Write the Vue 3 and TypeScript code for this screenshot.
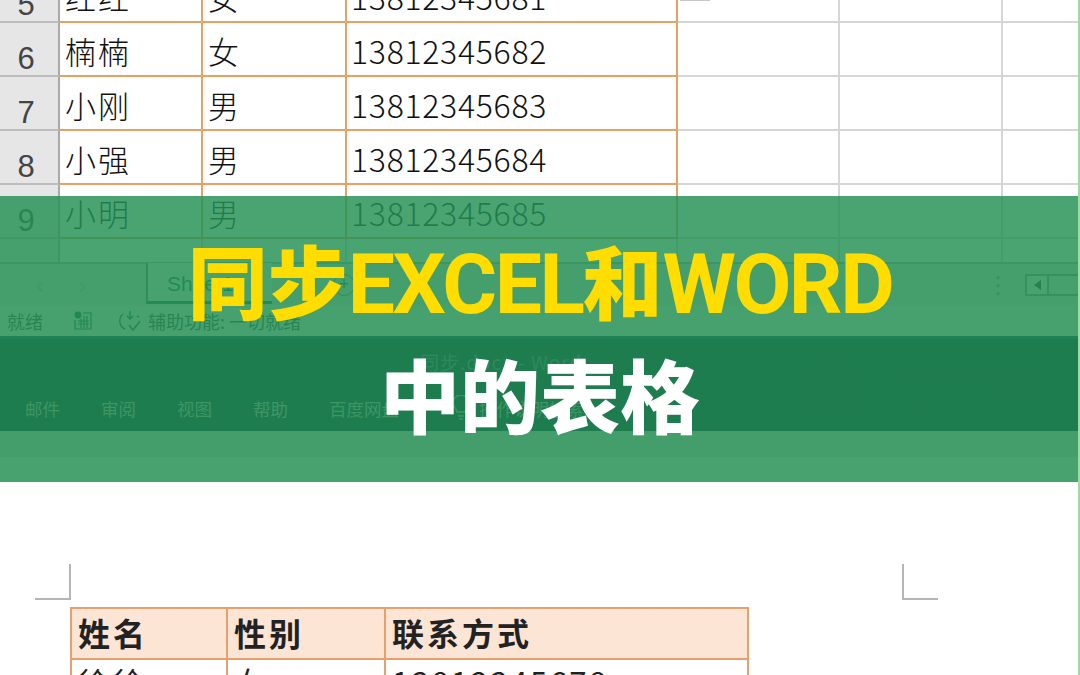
<script setup lang="ts">
interface Row { no: number; name: string; sex: string; phone: string }
const rows: Row[] = [
  { no: 5, name: '红红', sex: '女', phone: '13812345681' },
  { no: 6, name: '楠楠', sex: '女', phone: '13812345682' },
  { no: 7, name: '小刚', sex: '男', phone: '13812345683' },
  { no: 8, name: '小强', sex: '男', phone: '13812345684' },
  { no: 9, name: '小明', sex: '男', phone: '13812345685' },
]
const tabs = ['邮件', '审阅', '视图', '帮助', '百度网盘']
</script>

<template>
  <div class="page">
    <section class="excel">
      <div class="sheet">
        <div class="grid">
          <template v-for="r in rows" :key="r.no">
            <div class="hd"><span>{{ r.no }}</span></div>
            <div class="c or">{{ r.name }}</div>
            <div class="c or">{{ r.sex }}</div>
            <div class="c or phone">{{ r.phone }}</div>
            <div class="e"></div>
            <div class="e"></div>
            <div class="e last"></div>
          </template>
          <div class="hd short"></div>
          <div class="e short"></div>
          <div class="e short"></div>
          <div class="e short"></div>
          <div class="e short"></div>
          <div class="e short"></div>
          <div class="e short last"></div>
        </div>
        <div class="tick"></div>
      </div>
      <div class="tabbar">
        <span class="arrow">‹</span>
        <span class="arrow">›</span>
        <div class="tab">Sheet1</div>
        <span class="plus">+</span>
        <span class="dots">⋮</span>
        <div class="hscroll"><span class="tri"></span></div>
      </div>
      <div class="status">
        <span>就绪</span>
        <svg class="calc" width="20" height="20" viewBox="0 0 20 20">
          <circle cx="5" cy="4" r="3.4" fill="#1f5c38" />
          <path d="M10 2h8v16H2V9M5 10h11M5 13h11M8 8v9M11 5v12M14 5v12" fill="none" stroke="#1f5c38" stroke-width="1.2" />
        </svg>
        <svg class="acc" width="28" height="22" viewBox="0 0 28 22">
          <path d="M6 4a9 9 0 0 0 2 15M13 1v7M10 6l3 3 3-3M20 6l2 1M12 15l4 5 7-9" fill="none" stroke="#1f5c38" stroke-width="1.4" />
        </svg>
        <span class="acc-text">辅助功能: 一切就绪</span>
      </div>
    </section>

    <section class="word">
      <div class="titlebar">
        <div class="doc-title">同步.docx - Word</div>
        <div class="menu">
          <span v-for="t in tabs" :key="t">{{ t }}</span>
          <svg class="bulb" width="20" height="26" viewBox="0 0 20 26">
            <path d="M6 17c0-3-4-5-4-9a8 8 0 0 1 16 0c0 4-4 6-4 9zM7 21h6M8 24h4" fill="none" stroke="#b5a5a5" stroke-width="1.4" />
          </svg>
          <span class="search">操作说明搜索</span>
        </div>
        <svg class="logo" width="240" height="70" viewBox="0 0 240 70">
          <circle cx="30" cy="35" r="26" fill="none" stroke="#000" stroke-opacity=".18" stroke-width="5" />
          <path d="M20 48V22l20 26V22" fill="none" stroke="#000" stroke-opacity=".18" stroke-width="5" />
          <path d="M95 25h140M110 62l30-22M190 40h45" fill="none" stroke="#000" stroke-opacity=".1" stroke-width="4" />
        </svg>
      </div>
      <div class="ribbon-a"></div>
      <div class="ribbon-b"></div>
      <div class="doc">
        <div class="marks">
          <div class="mark left"></div>
          <div class="mark right"></div>
        </div>
        <div class="dtable">
          <div class="th">姓名</div>
          <div class="th">性别</div>
          <div class="th">联系方式</div>
          <div class="td">徐徐</div>
          <div class="td">女</div>
          <div class="td num">13812345678</div>
        </div>
      </div>
    </section>

    <div class="banner">
      <div class="titles">
        <div class="line one">同步<span class="lat">EXCEL</span>和<span class="lat">WORD</span></div>
        <div class="line two">中的表格</div>
      </div>
    </div>
    <div class="edge"></div>
  </div>
</template>

<style>
html, body { margin: 0; background: #fff; }
</style>

<style scoped>
.page {
  position: relative;
  width: 1080px;
  height: 675px;
  overflow: hidden;
  background: #fff;
  font-family: "Noto Sans CJK SC", "Liberation Sans", sans-serif;
  color: #222;
}
.excel { height: 339px; display: flex; flex-direction: column; }
.sheet { height: 262px; overflow: hidden; flex: none; position: relative; }
.tick { position: absolute; left: 680px; top: 0; width: 30px; height: 1px; background: #c8c8c8; }
.grid {
  display: grid;
  grid-template-columns: 60px 143px 144px 331px 162px 163px 77px;
  grid-auto-rows: 54px;
  margin-top: -31px;
}
.hd {
  background: #e6e6e6;
  border-right: 2px solid #a9a9a9;
  border-bottom: 2px solid #bdbdbd;
  box-sizing: border-box;
  display: flex;
  justify-content: center;
  font: 31px/1 "Liberation Sans", sans-serif;
  color: #444;
  padding-top: 20px;
  padding-right: 6px;
}
.c {
  box-sizing: border-box;
  border-right: 2px solid #e7a162;
  border-bottom: 2px solid #e7a162;
  padding: 2px 0 0 5px;
  display: flex;
  align-items: center;
  font: 300 31px/1 "Noto Sans CJK SC", sans-serif;
  letter-spacing: 2px;
  color: #111;
}
.c.phone { font-size: 32px; letter-spacing: 0.7px; padding-left: 4px; }
.e {
  box-sizing: border-box;
  border-right: 2px solid #d6d6d6;
  border-bottom: 2px solid #d6d6d6;
}
.last { border-right: 0; }
.short { height: 24px; border-bottom: 0; padding: 0; }

.tabbar {
  height: 43px;
  flex: none;
  background: #e2e2e2;
  border-top: 2px solid #ababab;
  box-sizing: border-box;
  display: flex;
  align-items: center;
  position: relative;
  font: 21px/1 "Liberation Sans", sans-serif;
  color: #1c6a3a;
}
.arrow { width: 42px; text-align: center; color: #c2c2c2; font-size: 26px; }
.arrow:first-child { margin-left: 19px; }
.arrow + .arrow { margin-right: 43px; }
.tab {
  width: 126px;
  height: 41px;
  margin-top: -2px;
  box-sizing: border-box;
  background: #f4f4f4;
  border-left: 2px solid #777;
  border-bottom: 3px solid #217346;
  padding: 10px 0 0 19px;
}
.plus {
  margin-left: 61px;
  width: 20px; height: 20px;
  border: 1.5px solid #777;
  border-radius: 50%;
  text-align: center;
  font-size: 18px;
}
.dots { margin-left: auto; margin-right: 15px; color: #999; font-size: 24px; }
.hscroll {
  width: 55px;
  height: 22px;
  box-sizing: border-box;
  border: 2px solid #8f8f8f;
  border-right: 0;
  display: flex;
  align-items: center;
  padding-left: 7px;
  background: linear-gradient(90deg, #f0f0f0 20px, #888 20px, #888 22px, #e6e6e6 22px);
}
.tri { border: 5px solid transparent; border-right: 7px solid #333; border-left: 0; }
.status {
  height: 31px;
  flex: none;
  background: #ebebeb;
  display: flex;
  align-items: center;
  padding-left: 7px;
  font-size: 18px;
  color: #444;
}
.calc { margin-left: 30px; }
.acc { margin-left: 24px; }
.acc-text { margin-left: 3px; }
.excel::after { content: ""; height: 3px; background: #0d3a5e; flex: none; }

.word { display: flex; flex-direction: column; }
.titlebar { height: 92px; background: #00192e; position: relative; }
.doc-title {
  padding: 10px 0 0 420px;
  font-size: 19px;
  line-height: 26px;
  color: #606078;
  letter-spacing: 1px;
}
.menu {
  display: flex;
  align-items: center;
  font-size: 17.5px;
  color: #b5a5a5;
  padding: 20px 0 0 25px;
  gap: 41px;
}
.bulb { margin-left: 11px; margin-right: -33px; }
.logo { position: absolute; left: 800px; top: 15px; }
.ribbon-a { height: 26px; background: #dcdcdc; }
.ribbon-b { height: 25px; background: #f3f3f3; }
.doc { padding-top: 82px; background: #fff; height: 193px; box-sizing: border-box; }
.marks { display: flex; padding-left: 35px; width: 902px; box-sizing: border-box; justify-content: space-between; height: 36px; }
.mark { width: 36px; height: 36px; box-sizing: border-box; border-bottom: 2px solid #b5b5b5; }
.mark.left { border-right: 2px solid #b5b5b5; }
.mark.right { border-left: 2px solid #b5b5b5; margin-right: -36px; }
.dtable {
  margin: 7px 0 0 70px;
  width: 679px;
  display: grid;
  grid-template-columns: 156px 158px 363px;
  grid-template-rows: 51px 60px;
  border-top: 2px solid #e5a06e;
  border-left: 2px solid #e5a06e;
  box-sizing: border-box;
}
.th, .td {
  box-sizing: border-box;
  border-right: 2px solid #e5a06e;
  border-bottom: 2px solid #e5a06e;
  padding-left: 6px;
}
.th {
  background: #fde5d5;
  font-size: 32px;
  font-weight: 700;
  letter-spacing: 3px;
  line-height: 46px;
  color: #222;
}
.td { font-size: 31px; letter-spacing: 4px; padding-top: 2px; line-height: 40px; }
.td.num { letter-spacing: 2.5px; padding-top: 1px; }

.banner {
  position: absolute;
  left: 0; right: 0;
  top: 196px;
  height: 286px;
  background: rgba(36, 145, 85, 0.83);
}
.titles { position: absolute; inset: 0; }
.line {
  position: absolute;
  left: 0; right: 0;
  text-align: center;
  font-weight: 900;
  font-size: 80px;
  line-height: 100px;
  white-space: nowrap;
}
.one { top: 32px; color: #ffdd00; }
.two { top: 146px; color: #fff; }
.lat { font-family: "Roboto", sans-serif; font-weight: 700; font-size: 84px; letter-spacing: -2.5px; }
.edge { position: absolute; right: 0; top: 0; bottom: 0; width: 2px; background: #9bdc9f; }
</style>
